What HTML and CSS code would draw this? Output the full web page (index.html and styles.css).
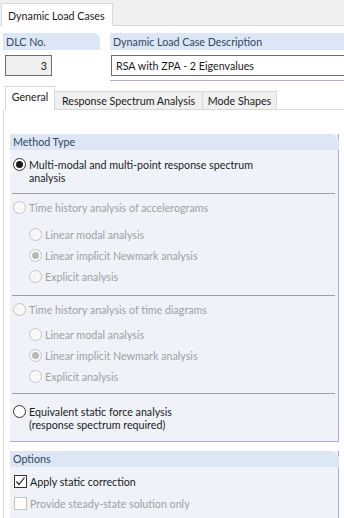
FILE: index.html
```html
<!DOCTYPE html>
<html>
<head>
<meta charset="utf-8">
<link rel="stylesheet" href="styles.css">
</head>
<body>
<div class="topbar">
  <div class="toptab">Dynamic Load Cases</div>
</div>
<div class="header-row">
  <div class="dlc">
    <div class="cap cap-chamfer">DLC No.</div>
    <div class="numfield">3</div>
  </div>
  <div class="desc">
    <div class="cap">Dynamic Load Case Description</div>
    <div class="textfield">RSA with ZPA - 2 Eigenvalues</div>
  </div>
</div>
<div class="tabs">
  <div class="tab active t-gen">General</div>
  <div class="tab t-rsa">Response Spectrum Analysis</div>
  <div class="tab t-mode">Mode Shapes</div>
  <div class="tabfill"></div>
</div>
<div class="page">
  <div class="group method">
    <div class="ghead">Method Type</div>
    <div class="gbody">
      <div class="row l1 r-multi"><span class="radio on"></span><span class="lbl">Multi-modal and multi-point response spectrum<br>analysis</span></div>
      <div class="sep s1"></div>
      <div class="row l1 dis r-acc"><span class="radio"></span><span class="lbl">Time history analysis of accelerograms</span></div>
      <div class="row l2 dis r-sub1"><span class="radio"></span><span class="lbl">Linear modal analysis</span></div>
      <div class="row l2 dis r-sub"><span class="radio on"></span><span class="lbl">Linear implicit Newmark analysis</span></div>
      <div class="row l2 dis r-sub"><span class="radio"></span><span class="lbl">Explicit analysis</span></div>
      <div class="sep s2"></div>
      <div class="row l1 dis r-acc"><span class="radio"></span><span class="lbl">Time history analysis of time diagrams</span></div>
      <div class="row l2 dis r-sub1b"><span class="radio"></span><span class="lbl">Linear modal analysis</span></div>
      <div class="row l2 dis r-sub"><span class="radio on"></span><span class="lbl">Linear implicit Newmark analysis</span></div>
      <div class="row l2 dis r-sub"><span class="radio"></span><span class="lbl">Explicit analysis</span></div>
      <div class="sep s3"></div>
      <div class="row l1 r-eq"><span class="radio"></span><span class="lbl">Equivalent static force analysis<br>(response spectrum required)</span></div>
    </div>
  </div>
  <div class="group options">
    <div class="ghead">Options</div>
    <div class="gbody">
      <div class="row c1"><span class="check on"><svg width="11" height="11" viewBox="0 0 11 11"><polyline points="1.5,5.5 4,8.5 9.5,1.5" fill="none" stroke="#222" stroke-width="1.2"/></svg></span><span class="lbl">Apply static correction</span></div>
      <div class="row c2 dis"><span class="check"></span><span class="lbl">Provide steady-state solution only</span></div>
    </div>
  </div>
</div>
</body>
</html>
```
FILE: styles.css
```css
* { box-sizing: border-box; }
html, body { margin: 0; padding: 0; }
body {
  width: 344px;
  height: 518px;
  overflow: hidden;
  background: #ffffff;
  font-family: "Lato", "Liberation Sans", sans-serif;
  font-size: 10.7px;
  color: #1b1b1b;
}
.topbar {
  height: 26px;
  background: #f0f0f0;
  border-bottom: 1px solid #d9d9d9;
  padding: 3px 0 0 1px;
  display: flex;
}
.toptab {
  width: 112px;
  height: 23px;
  background: #ffffff;
  border: 1px solid #d9d9d9;
  border-bottom: none;
  padding: 5px 0 0 6px;
  line-height: 13px;
  margin-bottom: -1px;
  white-space: nowrap;
}
.header-row {
  display: flex;
  padding: 7px 0 0 3px;
}
.cap {
  height: 17px;
  background: #dce6f4;
  color: #2d4766;
  line-height: 17px;
  padding-left: 3px;
  white-space: nowrap;
}
.cap-chamfer {
  clip-path: polygon(0 0, calc(100% - 4px) 0, 100% 4px, 100% 100%, 0 100%);
}
.dlc { width: 97px; }
.numfield {
  margin: 5px 0 0 2px;
  width: 47px;
  height: 21px;
  background: #f0f0f0;
  border: 1px solid #6e6e6e;
  text-align: right;
  padding-right: 4px;
  line-height: 19px;
}
.desc {
  flex: 1;
  margin-left: 10px;
  border-bottom: 1px solid #a8a8e8;
  padding-bottom: 4px;
}
.textfield {
  margin: 5px 0 0 1px;
  height: 21px;
  background: #ffffff;
  border: 1px solid #6e6e6e;
  border-right: none;
  padding-left: 4px;
  line-height: 19px;
}
.tabs {
  display: flex;
  margin-top: 5px;
  padding-left: 5px;
  height: 24px;
  align-items: flex-end;
}
.tab {
  height: 19px;
  background: #f0f0f0;
  border: 1px solid #d9d9d9;
  border-left: none;
  text-align: center;
  line-height: 18px;
  white-space: nowrap;
}
.t-gen { width: 50px; }
.t-rsa { width: 148px; }
.t-mode { width: 74px; }
.tab.active {
  height: 24px;
  background: #ffffff;
  border-left: 1px solid #d9d9d9;
  border-bottom: none;
  padding-top: 3px;
  line-height: 14px;
}
.tabfill {
  flex: 1;
  height: 1px;
  background: #d9d9d9;
}
.page {
  margin-left: 3px;
  border-left: 1px solid #d9d9d9;
  padding: 24px 5px 0 6px;
  height: 420px;
}
.group {
  background: #eff3f9;
  border-right: 1px solid #a8a8e8;
  border-bottom: 1px solid #a8a8e8;
}
.ghead {
  height: 16px;
  background: #dce6f4;
  color: #2d4766;
  line-height: 16px;
  padding-left: 3px;
  margin-right: -1px;
  clip-path: polygon(0 0, calc(100% - 6px) 0, 100% 6px, 100% 100%, 0 100%);
}
.method .gbody { padding: 0 0 10px 0; }
.options { margin-top: 9px; height: 80px; border-bottom: none; }
.row {
  display: flex;
  align-items: flex-start;
  line-height: 13px;
}
.row.l1 { padding-left: 3px; }
.row.l2 { padding-left: 19px; }
.row .lbl { padding-left: 3px; }
.r-multi { margin-top: 8px; }
.r-acc { margin-top: 7px; }
.r-sub1 { margin-top: 14px; }
.r-sub1b { margin-top: 12px; }
.r-sub { margin-top: 8px; }
.r-eq { margin-top: 11px; }
.sep {
  height: 1px;
  background: #a0a0a0;
  margin: 0 3px 0 2px;
}
.s1 { margin-top: 9px; }
.s2 { margin-top: 12px; }
.s3 { margin-top: 10px; }
.dis { color: #a0a0a0; }
.radio {
  flex: none;
  position: relative;
  width: 13px;
  height: 13px;
  border-radius: 50%;
  border: 1px solid #333333;
  background: #ffffff;
}
.radio.on::after {
  content: "";
  position: absolute;
  left: 2px;
  top: 2px;
  width: 7px;
  height: 7px;
  border-radius: 50%;
  background: #1a1a1a;
}
.dis .radio {
  border-color: #c4c4c4;
  background: #f8f8f8;
}
.dis .radio.on::after { background: #b8b8b8; }
.check {
  flex: none;
  width: 13px;
  height: 13px;
  border: 1px solid #333333;
  background: #ffffff;
  display: flex;
  align-items: center;
  justify-content: center;
}
.dis .check { border-color: #c4c4c4; }
.row.c1 { padding-left: 4px; margin-top: 8px; }
.row.c2 { padding-left: 4px; margin-top: 9px; }
```
